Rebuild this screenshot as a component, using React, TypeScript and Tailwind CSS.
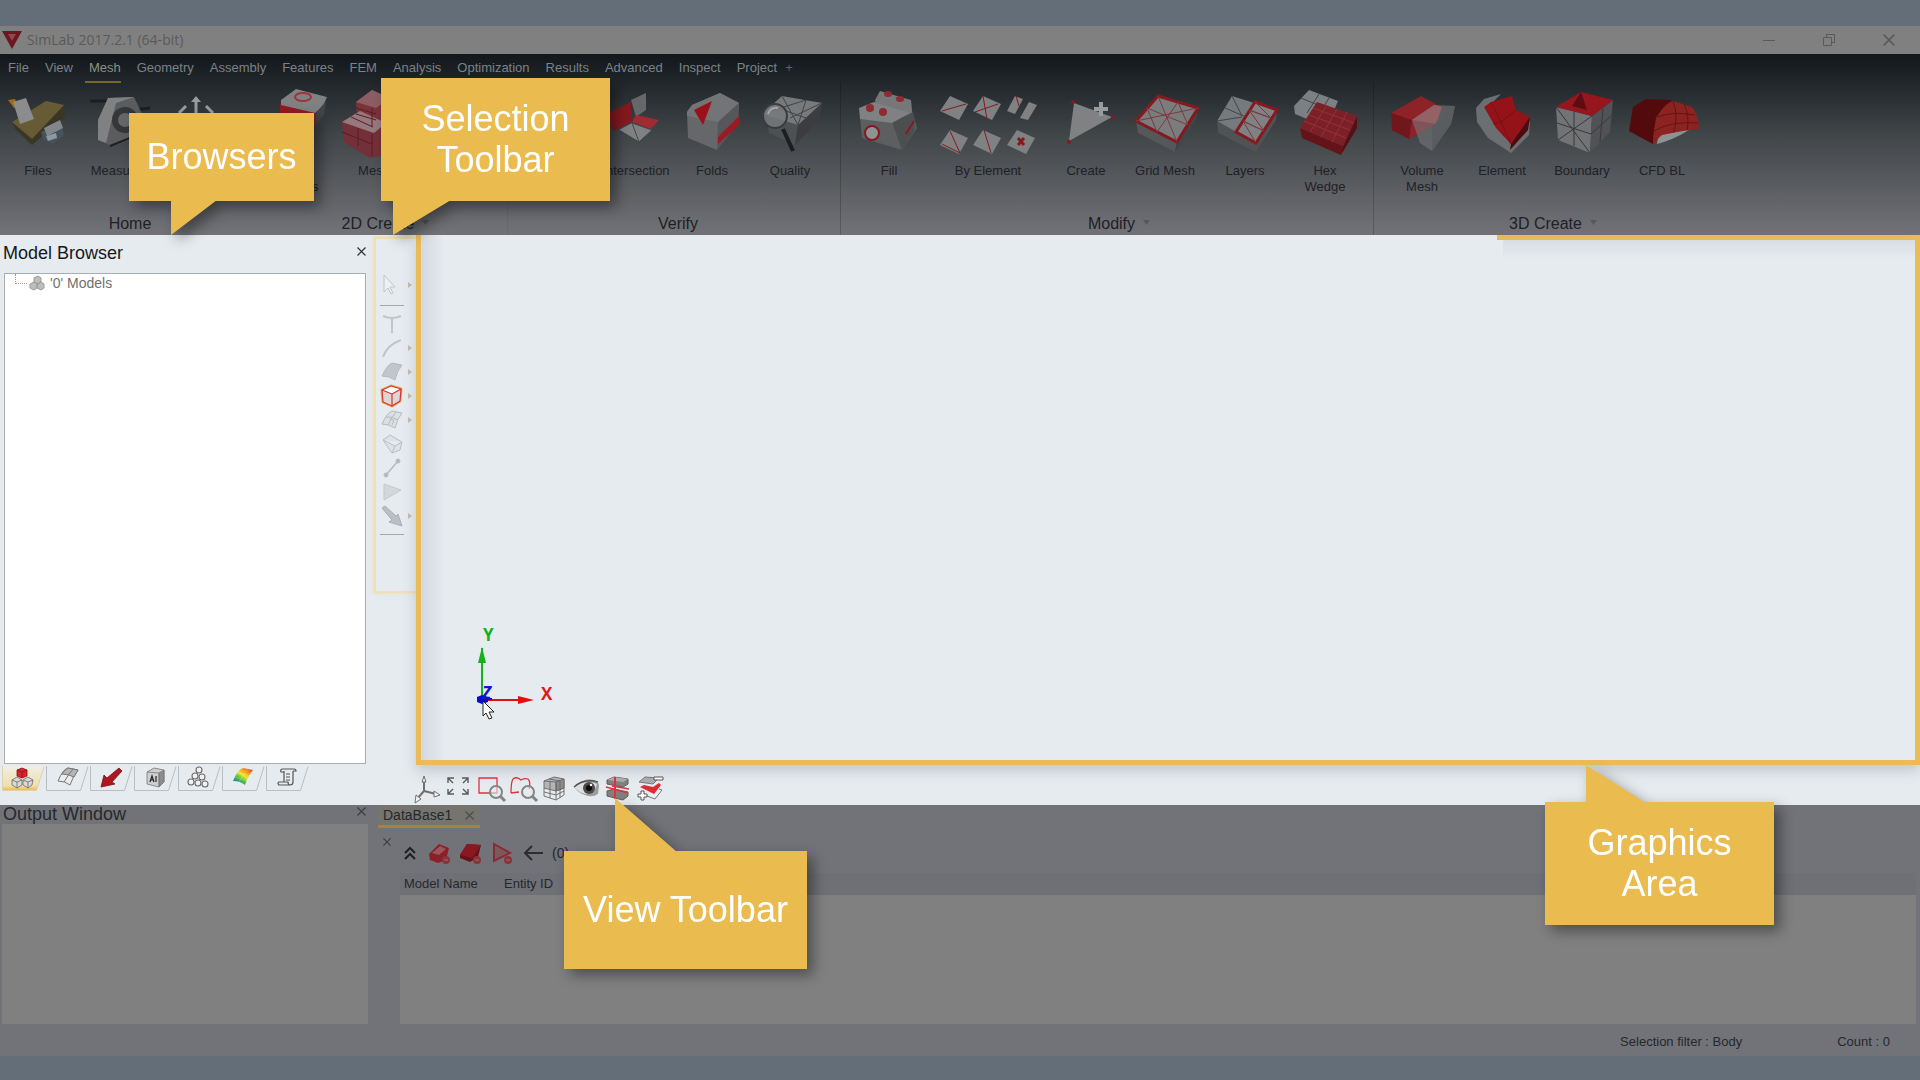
import type { ReactNode } from "react";
import clsx from "clsx";

const LIGHT = "#7f8182";
const MID = "#656769";
const DARK = "#424548";
const RED = "#86191f";

/* ---------- Ribbon icons ---------- */

function Big({ children, w = 64 }: { children: ReactNode; w?: number }) {
  return (
    <svg width={w} height={64} viewBox={`0 0 ${w} 64`} className="shrink-0 overflow-visible" aria-hidden="true">
      {children}
    </svg>
  );
}

const FilesIcon = () => (
  <Big>
    <path d="M6 34 40 13l18 4 1 12-33 28-16-15z" fill="#3a3627" />
    <path d="M6 34 40 13l18 4-32 34z" fill="#665b35" />
    <path d="m2 12 7-1 3 8-4 1z" fill="#a06c12" />
    <path d="m7 14 13-4 8 21-14 5z" fill="#8a8c8d" />
    <path d="m35 44 20-9 3 12-12 9-9-5z" fill="#46535f" />
    <path d="m38 40 16-8 3 8-16 8z" fill="#82878c" />
    <path d="m40 48 10-3 1 5-9 3z" fill="#8f98a1" />
  </Big>
);

const MeasureIcon = () => (
  <Big>
    <path d="M6 13h22M50 22l16-2" stroke="#1c1e21" strokeWidth="3" />
    <path d="m14 32 10-22 26-1 10 21-14 22-18 6-14-6z" fill="#5a5c5e" />
    <path d="m14 32 10-22 26-1-18 6-10 40-8-3z" fill={LIGHT} />
    <circle cx="41" cy="32" r="13" fill="#343638" />
    <circle cx="41" cy="32" r="7" fill={MID} />
    <path d="m26 58 20-8" stroke="#1f2022" strokeWidth="2" />
  </Big>
);

const OrientIcon = () => (
  <Big>
    <path d="M32 26V11M15 25l7-7M49 25l-7-7" stroke="#999c9f" strokeWidth="3" fill="none" />
    <path d="m27 14 5-6 5 6z" fill="#999c9f" />
  </Big>
);

const FillHolesIcon = () => (
  <Big>
    <path d="m10 16 36 9-2 16-34-8z" fill="#94191f" />
    <path d="m11 12 15-11 31 8-4 9-8 7-34-8z" fill={LIGHT} />
    <path d="m46 25 10-12-2 14-9 12z" fill={DARK} />
    <ellipse cx="33" cy="9" rx="8" ry="4" fill="none" stroke="#a3303a" strokeWidth="2" />
  </Big>
);

const MeshIcon = () => (
  <Big>
    <path d="m14 14 16-12 18 8-2 32-30 2z" fill="#7a333a" />
    <path d="m0 34 18-11 26 12-2 32-14 3L2 54z" fill="#743038" />
    <path d="m0 34 18-11 26 12-12 10z" fill="#96797c" />
    <path d="m14 14 16-12 18 8-14 10z" fill="#8c5e63" />
    <path d="M14 20l20 6M14 26l20 6M0 44l30 12M16 40v18M30 46v22M9 29l22 10M30 20v18" stroke="#5c1a22" fill="none" />
  </Big>
);

const IntersectionIcon = () => (
  <Big>
    <path d="M27 12 42 5v17l-10 7z" fill={MID} />
    <path d="M2 26 27 14v20l-17 9z" fill={RED} />
    <path d="m32 27 23 5-8 9-19-7z" fill="#a02b31" />
    <path d="m15 42 13-7 20 7-13 12z" fill={LIGHT} />
    <path d="m15 42 20 12-7-19M35 54l13-12-20-7" stroke={DARK} fill="none" />
  </Big>
);

const FoldsIcon = () => (
  <Big>
    <path d="m7 24 5-7 28-12 19 10-1 19-21 28-29-12z" fill={MID} />
    <path d="m7 24 5-7 28-12 19 10-21 19-31-6z" fill="#727476" />
    <path d="M38 34 59 15l-1 20-21 27z" fill="#55575a" />
    <path d="m14 22 18-9-9 24z" fill="#9c1119" />
    <path d="m38 49 22-22v9L38 56z" fill="#9c1b22" />
  </Big>
);

const QualityIcon = () => (
  <Big>
    <path d="m8 26 32 11-3 20-26-12z" fill="#4e5154" />
    <path d="m40 37 24-22-2 17-25 25z" fill="#3b3d40" />
    <path d="m4 26 20-18 40 7-24 22z" fill="#77797b" />
    <path d="m24 8 16 29 8-25M14 18l34 12M64 15 32 30M10 24l38-12" stroke={DARK} fill="none" />
    <circle cx="17" cy="28" r="12" fill="#77797b" fillOpacity=".85" stroke="#3a3c3e" strokeWidth="2" />
    <path d="M10 26a8 8 0 0 1 10-6" stroke="#a5a7a9" strokeWidth="2" fill="none" />
    <path d="m25 41 10 22" stroke="#1d1e20" strokeWidth="4" />
  </Big>
);

const FillIcon = () => (
  <Big>
    <path d="m18 12 5-9 31 9 2 20-36-8z" fill="#757779" />
    <path d="m3 30 32 4 21-8 4 14-15 22-40-12z" fill="#5c5e60" />
    <path d="m35 34 10 28 13-20-2-18z" fill="#4c4e50" />
    <path d="m2 20 15-6 36 11-18 10-32-4z" fill={LIGHT} />
    <g fill="#8f2a30">
      <circle cx="13" cy="20" r="4" />
      <circle cx="26" cy="24" r="4" />
      <ellipse cx="31" cy="6" rx="4" ry="3" />
      <ellipse cx="43" cy="11" rx="4" ry="3" />
    </g>
    <circle cx="15" cy="45" r="7" fill="#909294" stroke={RED} strokeWidth="2" />
    <path d="m49 46 8-13" stroke={RED} strokeWidth="2" />
  </Big>
);

const TILES = [
  { x: 14, y: 20, d: "m-12 3 24-7" },
  { x: 47, y: 20, d: "m-12 4 23-8M-4-12l4 23" },
  { x: 81, y: 20, d: "m-5-12 3 10" },
  { x: 14, y: 54, d: "m-12 2 18 9M-4-11l10 22" },
  { x: 47, y: 54, d: "m-3-12 7 23" },
  { x: 81, y: 54, d: "m-3-4 6 7m0-7-6 7" },
];

const ByElementIcon = () => (
  <Big w={96}>
    {TILES.map((tile, i) => (
      <g key={i} transform={`translate(${tile.x} ${tile.y})`}>
        {i === 2 ? (
          <path d="m-14 3 8-15 8 3-8 15zM-1 10 8-6l8 3-9 15z" fill={LIGHT} />
        ) : (
          <path d="m-14 3 10-15L14-4 5 12z" fill={LIGHT} />
        )}
        <path d={tile.d} stroke={RED} strokeWidth={i === 5 ? 3 : 1} fill="none" />
      </g>
    ))}
  </Big>
);

const CreateIcon = () => (
  <Big>
    <path d="m20 15 38 14-43 24z" fill={LIGHT} />
    <path d="M47 14v14M40 21h14" stroke="#999b9d" strokeWidth="4" />
    <circle cx="19" cy="14" r="2" fill={RED} />
    <circle cx="59" cy="29" r="2" fill={RED} />
    <circle cx="15" cy="54" r="2" fill={RED} />
  </Big>
);

const GridMeshIcon = () => (
  <Big>
    <path d="m3 33 41 21-2 10L5 45z" fill="#55575a" />
    <path d="m44 54 21-34-2 12-21 32z" fill={DARK} />
    <path d="M25 8 65 20 44 54 3 33z" fill="#7a7c7e" stroke={RED} strokeWidth="3" />
    <path d="m25 8 19 46M14 20l41 17M45 14 24 44M65 20 3 33M14 20l10 24M45 14l10 23" stroke="#7a3a3f" fill="none" />
  </Big>
);

const LayersIcon = () => (
  <Big>
    <path d="m4 33 39 20 21-31-1 10-20 32L5 45z" fill="#505254" />
    <path d="m4 33 15-25 45 14-21 33z" fill="#777a7c" />
    <path d="m12 20 21 9M19 8l10 20M4 33l25-4" stroke={DARK} fill="none" />
    <path d="m42 14 22 8-21 33-20-11z" fill={LIGHT} stroke={RED} strokeWidth="3" />
    <path d="m36 22 22 8M30 33l21 10M42 14l16 16-22-8 15 21-21-10 13 22" stroke="#7a3a3f" fill="none" />
  </Big>
);

const HexWedgeIcon = () => (
  <Big>
    <path d="M1 18 16 2l29 11-6 14-25 4L2 26z" fill="#7c8082" />
    <path d="m8 10 29 12M26 6 14 25M36 10 25 28" stroke={DARK} fill="none" />
    <path d="m7 40 43 18-2 9L9 50z" fill="#641319" />
    <path d="m50 58 14-30v12L48 67z" fill="#560f14" />
    <path d="m24 14 40 14-14 30L7 40z" fill="#7c2027" />
    <path d="m20 20 41 15M16 27l41 15M11 33l42 17M34 17 17 44M44 21 28 49M54 24 39 54" stroke="#963038" fill="none" />
  </Big>
);

const VolumeMeshIcon = () => (
  <Big>
    <path d="m1 25 30-17 20 11-5 17-27 15-17-9z" fill="#8d2227" />
    <path d="m1 25 21 7-3 19-17-9z" fill="#6f171c" />
    <path d="m22 32 22-15 21 1-4 18-19 27-12-8z" fill="#75787a" fillOpacity=".6" />
    <path d="m22 32 22-15 8 2-6 17z" fill="#946164" />
    <path d="m42 38 23-20-4 18-19 27z" fill="#5a5d5f" />
  </Big>
);

const ElementIcon = () => (
  <Big>
    <path d="m6 20 8-9 17-5-9 9 4 24 15 17 19-23-1 14-18 18-23-15L7 34z" fill="#6c6f71" />
    <path d="m21 14 21-6 4 14 14 7-19 27-15-16-12-21z" fill="#951318" />
    <path d="m21 14 10 20 10 22M31 34l15-12M31 34l-8 2" stroke="#7a0f14" fill="none" />
    <path d="m41 56 19-27-2 13-18 20z" fill="#4d0b0e" />
  </Big>
);

const BoundaryIcon = () => (
  <Big>
    <path d="m6 19 36 9-2 37L8 52z" fill="#717375" />
    <path d="m42 28 21-16-3 32-20 21z" fill="#505255" />
    <path d="M6 19 31 4l32 8-21 16z" fill="#96161e" />
    <path d="m22 18 9-14 6 18z" fill="#5c0c12" />
    <path d="m7 35 34 11M24 24v34M6 19l34 46M42 28 8 52M53 20l-3 34M41 46l20-18" stroke="#36383a" fill="none" />
  </Big>
);

const CfdIcon = () => (
  <Big>
    <path d="m-1 43 4-24 13-8 26 1-16 17-3 27z" fill="#520a0d" />
    <path d="M23 56q0-16 4-27 6-12 16-16l19 6q7 8 7 22-16 1-28 6-10 3-18 9z" fill="#8c2320" />
    <path d="M27 29q16-6 38-2M24 43q16-10 44-8M43 13q6 16 0 34M54 16q6 12 3 27" stroke="#5f1514" fill="none" />
    <path d="M27 56q0-6 5-9 14-3 27-5-16 10-32 14z" fill="#8f9293" />
  </Big>
);

/* ---------- Ribbon data ---------- */

const TABS = [
  "File", "View", "Mesh", "Geometry", "Assembly", "Features", "FEM",
  "Analysis", "Optimization", "Results", "Advanced", "Inspect", "Project",
];

type Tool = { label: string; icon: ReactNode; width?: string; wrap?: string };
type Group = { name: string; menu?: boolean; className: string; title?: string; tools: Tool[] };

const GROUPS: Group[] = [
  {
    name: "Home",
    className: "w-[260px]",
    tools: [
      { label: "Files", icon: <FilesIcon />, width: "w-[76px]" },
      { label: "Measure", icon: <MeasureIcon /> },
      { label: "Orient", icon: <OrientIcon /> },
    ],
  },
  {
    name: "2D Create",
    menu: true,
    className: "w-[248px] border-r border-black/5",
    title: "pl-1",
    tools: [
      { label: "Fill Holes", icon: <FillHolesIcon />, width: "w-[84px]", wrap: "w-10" },
      { label: "Mesh", icon: <MeshIcon />, width: "w-[60px]" },
    ],
  },
  {
    name: "Verify",
    className: "w-[333px] border-r border-black/20",
    title: "pl-2",
    tools: [
      { label: "Intersection", icon: <IntersectionIcon />, width: "w-[76px] ml-[90px]" },
      { label: "Folds", icon: <FoldsIcon />, width: "w-[76px]" },
      { label: "Quality", icon: <QualityIcon /> },
    ],
  },
  {
    name: "Modify",
    menu: true,
    className: "w-[533px] pl-2 border-r border-black/20",
    title: "pl-4",
    tools: [
      { label: "Fill", icon: <FillIcon /> },
      { label: "By Element", icon: <ByElementIcon />, width: "w-[118px]" },
      { label: "Create", icon: <CreateIcon />, width: "w-[78px]" },
      { label: "Grid Mesh", icon: <GridMeshIcon /> },
      { label: "Layers", icon: <LayersIcon /> },
      { label: "Hex Wedge", icon: <HexWedgeIcon />, wrap: "w-12" },
    ],
  },
  {
    name: "3D Create",
    menu: true,
    className: "w-[350px] pl-2",
    tools: [
      { label: "Volume Mesh", icon: <VolumeMeshIcon />, wrap: "w-14" },
      { label: "Element", icon: <ElementIcon /> },
      { label: "Boundary", icon: <BoundaryIcon /> },
      { label: "CFD BL", icon: <CfdIcon /> },
    ],
  },
];

/* ---------- Small pieces ---------- */

function Cross({ size = 9, className }: { size?: number; className?: string }) {
  return (
    <svg width={size} height={size} viewBox="0 0 9 9" className={className} aria-hidden="true">
      <path d="m.5.5 8 8m0-8-8 8" stroke="currentColor" strokeWidth="1.2" />
    </svg>
  );
}

function Callout({ children, className, tail }: { children: ReactNode; className: string; tail: ReactNode }) {
  return (
    <div
      className={clsx(
        "absolute z-20 flex items-center justify-center bg-[#eabb4e] pb-[2px] text-center text-4xl leading-[41px] text-white drop-shadow-[6px_6px_7px_rgba(0,0,0,0.4)]",
        className
      )}
    >
      {children}
      {tail}
    </div>
  );
}

function Tail({ w, h, points, className }: { w: number; h: number; points: string; className: string }) {
  return (
    <svg width={w} height={h} className={clsx("absolute", className)} aria-hidden="true">
      <polygon points={points} fill="#eabb4e" />
    </svg>
  );
}

/* ---------- Browser tabs ---------- */

const BROWSER_TABS = [
  {
    label: "Model",
    icon: (
      <g stroke="#6b6b6b" strokeWidth=".8">
        <path d="m12 14 5-3 5 3v5l-5 3-5-3zM23 14l5-3 5 3-1 5-4 3-5-3z" fill="#d9d9d9" />
        <path d="m12 14 5 2 5-2M23 14l5 2 5-2M17 16v6M28 16v6" fill="none" />
        <path d="m17 4 5-2 5 2v6l-5 2-5-2z" fill="#d8242c" stroke="#8d1218" />
        <path d="m17 4 5 2 5-2M22 6v6" fill="none" stroke="#8d1218" />
      </g>
    ),
  },
  {
    label: "Mesh",
    icon: (
      <g stroke="#777" strokeWidth="1">
        <path d="M14 15q5-12 10-13l10 2q-5 6-8 15-5-4-12-4z" fill="#ececec" />
        <path d="M24 2l10 2-4 7q-6-3-12-3 3-5 6-6z" fill="#b5b5b5" />
        <path d="M29 3q-5 6-9 13" fill="none" />
      </g>
    ),
  },
  {
    label: "Loads",
    icon: <path d="m13 21 3-12 3 3L31 2l3 3-10 11 3 2z" fill="#b01520" stroke="#701018" strokeWidth=".8" />,
  },
  {
    label: "Attributes",
    icon: (
      <g stroke="#777" strokeWidth=".8">
        <path d="m15 6 7-4 10 2v12l-5 5-12-3z" fill="#cfcfcf" />
        <path d="m27 7 5-3v12l-5 5z" fill="#8d8d8d" />
        <path d="m15 6 12 1v14" fill="none" />
        <path d="m18 16 2-6 2 6m-3-2h2m3-4v6" stroke="#222" strokeWidth="1.2" fill="none" />
      </g>
    ),
  },
  {
    label: "Assembly",
    icon: (
      <g fill="#f1f1f1" stroke="#6c6c6c" strokeWidth="1.1">
        <circle cx="23" cy="4" r="3" />
        <circle cx="19" cy="10" r="3" />
        <circle cx="26" cy="11" r="3" />
        <circle cx="15" cy="16" r="3" />
        <circle cx="22" cy="17" r="3" />
        <circle cx="29" cy="18" r="3" />
      </g>
    ),
  },
  {
    label: "Results",
    icon: (
      <g>
        <path d="M13 15q5-12 10-13l10 2q-5 6-8 15-5-4-12-4z" fill="url(#rainbow)" />
        <path d="m18 7 13 3M15 11l13 4M28 3q-5 6-9 13" stroke="#fff" strokeOpacity=".35" strokeWidth=".6" fill="none" />
      </g>
    ),
  },
  {
    label: "Scripts",
    icon: (
      <g stroke="#555" strokeWidth="1.2" fill="none">
        <path d="M18 3h12q2 0 2 2h-3M18 3q-2 1-1 3h3M20 5v11M29 5v11q0 3-3 3H15q-2-2 0-3h9q0 3 2 3" />
        <path d="M22 8h4M22 11h4M22 14h4" />
      </g>
    ),
  },
];

/* ---------- Selection tools ---------- */

const SELECTION_TOOLS = [
  { label: "Node", icon: <path d="M3 4q9 4 18 0M12 6v15" stroke="#bfc5ca" strokeWidth="2" fill="none" /> },
  { label: "Edge", menu: true, icon: <path d="M3 21Q7 9 21 4" stroke="#bfc5ca" strokeWidth="2" fill="none" /> },
  { label: "Face", menu: true, icon: <path d="M2 16Q7 5 12 3l10 2q-5 6-7 15-6-4-13-4z" fill="#c0c6cb" stroke="#b4babf" /> },
  {
    label: "Body",
    menu: true,
    active: true,
    icon: (
      <g strokeLinejoin="round">
        <path d="m2 6 9-4 10 3-1 12-8 5-9-4z" fill="#f6efee" stroke="#f3a055" strokeWidth="3" />
        <path d="m2 6 9-4 10 3-9 5z" fill="#fff" />
        <path d="m2 6 10 4 9-5-1 12-8 5-9-4z" fill="#dcd6d6" />
        <path d="m2 6 9-4 10 3-1 12-8 5-9-4zM2 6l10 4 9-5M12 10v12" fill="none" stroke="#cf3b2c" strokeWidth="1.2" />
      </g>
    ),
  },
  {
    label: "Element face",
    menu: true,
    icon: (
      <g stroke="#b4babf" fill="#dbe0e4">
        <path d="M2 16Q7 5 12 3l10 2q-5 6-7 15-6-4-13-4z" />
        <path d="M6 9q6-1 12 3M16 4q-5 6-8 13M10 11l4 1-2 5" fill="none" />
      </g>
    ),
  },
  { label: "Element", icon: <path d="m3 8 7-5 12 7-2 8-8 3zM3 8l12 6 7-4M15 14l-3 7" stroke="#b9bfc4" fill="#dde2e6" /> },
  {
    label: "Element edge",
    icon: (
      <g fill="#b4babf" stroke="#b4babf">
        <path d="m6 19 12-14" strokeWidth="1.5" />
        <circle cx="6" cy="19" r="2" />
        <circle cx="18" cy="5" r="2" />
      </g>
    ),
  },
  { label: "Shell", icon: <path d="m4 4 17 6L4 20z" fill="#d2d7db" stroke="#c2c8cd" /> },
  { label: "Direction", menu: true, icon: <path d="m2 4 3-2 11 10 2-2 4 12-13-4 3-2z" fill="#b9bfc4" stroke="#a9afb4" /> },
];

/* ---------- View tools ---------- */

const LENS = (
  <g fill="none" stroke="#858585">
    <circle cx="20" cy="18" r="6" strokeWidth="2" fill="#e6ebef" fillOpacity=".6" />
    <path d="m24 22 5 5" strokeWidth="3" />
  </g>
);

const VIEW_TOOLS = [
  {
    label: "Triad",
    icon: (
      <g stroke="#707070" fill="#f3f3f3">
        <path d="M12 17V6M12 17l12 3M12 17 5 25" strokeWidth="2" />
        <path d="m10 8 2-6 2 6zM22 17l6 4-6 2zM4 21l5 4-6 4z" />
      </g>
    ),
  },
  { label: "Fit", icon: <path d="M4 9V4h6M4 4l5 5M18 4h6v5M24 4l-5 5M4 15v5h6M4 20l5-5M18 20h6v-5M24 20l-5-5" stroke="#5b5b5b" strokeWidth="1.4" fill="none" /> },
  { label: "Zoom box", icon: <><path d="M3 4h18v15H3z" stroke="#e0323a" strokeWidth="1.3" fill="none" />{LENS}</> },
  { label: "Zoom area", icon: <><path d="M3 19Q3 8 5 5q4-3 8 1 4-2 7-1 3 3 1 10M3 19l8-1" stroke="#e0323a" strokeWidth="1.3" fill="none" />{LENS}</> },
  {
    label: "Display mode",
    icon: (
      <g stroke="#666" strokeWidth=".9">
        <path d="m4 7 10-4 10 2v9l-8 3-12-3z" fill="#b5b5b5" />
        <path d="m16 8 8-3v9l-8 3z" fill="#8b8b8b" />
        <path d="M4 14v8l12 4 8-5v-7M16 8v18M4 7l12 1M9 5l11 2v17M10 8v16M4 18l12 3 8-4" fill="none" />
      </g>
    ),
  },
  {
    label: "Visibility",
    icon: (
      <g>
        <path d="M2 13Q12 3 22 6q5 2 5 6l-1 8q-6 4-13 1Q6 19 2 13z" fill="#9d9d9d" />
        <path d="M2 13q12-8 23-3-2 9-11 10-7-1-12-7z" fill="#dedede" />
        <circle cx="17" cy="14" r="6" fill="#4a4a4a" />
        <circle cx="17" cy="14" r="3" fill="#0a0a0a" />
        <circle cx="19" cy="11" r="1.2" fill="#fff" />
        <path d="M2 13Q12 4 26 8" stroke="#555" strokeWidth="1.5" fill="none" />
      </g>
    ),
  },
  {
    label: "Section",
    icon: (
      <g>
        <path d="m3 6 7-3 14 2v5l-5 3-16-3zM3 17l7-2 14 3v4l-5 4-16-4z" fill="#808080" stroke="#5c5c5c" />
        <path d="m3 6 7-3 14 2-5 3z" fill="#ababab" />
        <path d="m2 13 22 6M8 12l17 3" stroke="#e0323a" strokeWidth="1.5" />
        <path d="M11 3v22" stroke="#e0323a" strokeWidth="2" />
      </g>
    ),
  },
  {
    label: "Layers",
    icon: (
      <g>
        <path d="m3 8 6-5 14 1-6 6z" fill="#aaa" stroke="#777" />
        <path d="m11 22 8 3 7-9-3-1" fill="#eee" stroke="#777" />
        <path d="m4 13 4-2 9 2 6-4 2 2-7 9z" fill="#dd2b33" />
        <path d="M18 3h9v3h-9zM5 17h3v3h3v3H8v3H5v-3H2v-3h3z" fill="#fff" stroke="#555" />
      </g>
    ),
  },
];

/* ---------- Sections ---------- */

function TitleBar() {
  return (
    <div className="flex h-7 items-center bg-[#808080] text-[#5a5a5a]">
      <svg width="20" height="18" viewBox="0 0 20 18" className="ml-[2px]" aria-hidden="true">
        <path d="M0 0h20L10 18z" fill="#6c1620" />
        <path d="M6 3h8l-4 7z" fill="#8d4950" />
      </svg>
      <h1 className="ml-[5px] font-['Open_Sans'] text-sm">SimLab 2017.2.1 (64-bit)</h1>
      <div className="ml-auto flex items-center gap-12 pr-[25px]">
        <button aria-label="Minimize" className="flex w-3 justify-center">
          <span className="h-px w-3 bg-[#5a5a5a]" />
        </button>
        <button aria-label="Restore">
          <svg width="12" height="12" viewBox="0 0 12 12" fill="none" stroke="currentColor" aria-hidden="true">
            <path d="M.5 3.5h8v8h-8zM3.5 3V.5h8v8H9" />
          </svg>
        </button>
        <button aria-label="Close">
          <Cross size={12} />
        </button>
      </div>
    </div>
  );
}

function Ribbon() {
  return (
    <header className="relative bg-linear-to-b from-[#12171c] via-[#414649] via-45% to-[#737378] text-[#1e2126]">
      <nav className="flex h-7 items-center gap-4 pl-2 text-[13px] text-[#7c8288]">
        {TABS.map((tab) => (
          <a
            key={tab}
            href="#"
            className={clsx("relative leading-7", tab === "Mesh" && "text-[#8d8f86]")}
          >
            {tab}
            {tab === "Mesh" && <span className="absolute -left-1 right-0 -bottom-px h-[2px] bg-[#75682a]" />}
          </a>
        ))}
        <button aria-label="Add tab" className="-ml-2 text-[#5c6268]">+</button>
      </nav>

      <div className="flex h-[153px]">
        {GROUPS.map((group) => (
          <section key={group.name} className={clsx("flex shrink-0 flex-col pt-[6px]", group.className)}>
            <div className="flex flex-1 items-start">
              {group.tools.map((tool) => (
                <button
                  key={tool.label}
                  className={clsx("flex shrink-0 flex-col items-center text-[13px] leading-4", tool.width ?? "w-20")}
                >
                  {tool.icon}
                  <span className={clsx("mt-[11px]", tool.wrap)}>{tool.label}</span>
                </button>
              ))}
            </div>
            <h2 className={clsx("flex items-center justify-center gap-2 text-base leading-[22px]", group.title)}>
              {group.name}
              {group.menu && (
                <svg width="7" height="5" viewBox="0 0 7 5" className="mb-1" aria-hidden="true">
                  <path d="M0 0h7L3.5 5z" fill="#55575c" />
                </svg>
              )}
            </h2>
          </section>
        ))}
      </div>

      <Callout
        className="bottom-[34px] left-[129px] h-[88px] w-[185px]"
        tail={<Tail w={48} h={35} points="0,0 46,0 0,35" className="top-[87px] left-[42px]" />}
      >
        Browsers
      </Callout>
      <Callout
        className="bottom-[34px] left-[381px] h-[123px] w-[229px]"
        tail={<Tail w={60} h={35} points="0,0 58,0 0,35" className="top-[122px] left-3" />}
      >
        Selection
        <br />
        Toolbar
      </Callout>
    </header>
  );
}

function ModelBrowser() {
  return (
    <aside className="flex w-[366px] shrink-0 flex-col">
      <div className="flex h-[38px] items-center justify-between pb-[2px] pl-[3px]">
        <h2 className="text-lg text-[#15171a]">Model Browser</h2>
        <button aria-label="Close Model Browser" className="mb-1 text-[#333]">
          <Cross />
        </button>
      </div>
      <div className="ml-1 flex-1 border border-[#a9adb1] bg-white">
        <div className="flex h-[18px] items-center pl-[10px] text-sm text-[#707070]">
          <span className="mb-[9px] h-[10px] w-3 border-b border-l border-dotted border-[#999]" />
          <svg width="16" height="16" viewBox="0 0 16 16" className="mr-[5px] ml-[2px]" aria-hidden="true">
            <path d="m5 3 4-2 3 2v4l-3 2-4-2zM1 9l4-2 3 2v4l-3 2-4-2zM8 9l4-2 3 2v4l-3 2-4-2z" fill="#bdbdbd" stroke="#9a9a9a" />
          </svg>
          '0' Models
        </div>
      </div>
      <div className="flex h-[41px] items-start pt-[2px] pl-[2px]">
        <svg width="0" height="0" className="absolute" aria-hidden="true">
          <linearGradient id="rainbow" x1="1" y1="0" x2="0.2" y2="1">
            <stop offset="0" stopColor="#e8281e" />
            <stop offset=".3" stopColor="#f59a1b" />
            <stop offset=".5" stopColor="#f2e527" />
            <stop offset=".7" stopColor="#4fc23a" />
            <stop offset="1" stopColor="#2468d8" />
          </linearGradient>
          <linearGradient id="activeTab" x1="0" y1="0" x2="0" y2="1">
            <stop offset="0" stopColor="#f0eee6" />
            <stop offset=".8" stopColor="#efe0b0" />
            <stop offset="1" stopColor="#e8bd45" />
          </linearGradient>
        </svg>
        {BROWSER_TABS.map((tab, i) => (
          <button key={tab.label} aria-label={tab.label}>
            <svg width="44" height="25" viewBox="0 0 44 25" className="overflow-visible" aria-hidden="true">
              <path d="M.5 0v24.5h34L42 .5" fill={i === 0 ? "url(#activeTab)" : "none"} stroke={i === 0 ? "#dcd2b0" : "#b9bec3"} />
              <g transform="translate(-2 0)">{tab.icon}</g>
            </svg>
          </button>
        ))}
      </div>
    </aside>
  );
}

function FlyoutMark() {
  return (
    <svg width="4" height="6" viewBox="0 0 4 6" className="absolute -right-1" aria-hidden="true">
      <path d="m0 0 4 3-4 3z" fill="#c3bda9" />
    </svg>
  );
}

function SelectionToolbar() {
  return (
    <div className="w-[50px] shrink-0 pt-[2px] pl-2">
      <div className="flex h-[356px] flex-col items-center border-2 border-r-0 border-[#f3dfae] pt-[34px] pr-2 shadow-[0_0_4px_rgba(243,210,130,0.5)]">
        <button aria-label="Select" className="relative flex h-6 w-full items-center justify-center">
          <svg width="24" height="24" viewBox="0 0 24 24" aria-hidden="true">
            <path d="M4 2v17l4-4 3 6 2-1-3-6h5z" fill="#edf1f4" stroke="#bfc4c9" />
          </svg>
          <FlyoutMark />
        </button>
        <hr className="mt-2 mb-[6px] w-6 border-[#a4a9ad]" />
        {SELECTION_TOOLS.map((tool) => (
          <button
            key={tool.label}
            aria-label={tool.label}
            aria-pressed={!!tool.active}
            className="relative flex h-6 w-full items-center justify-center"
          >
            <svg width="24" height="24" viewBox="0 0 24 24" aria-hidden="true">
              {tool.icon}
            </svg>
            {tool.menu && <FlyoutMark />}
          </button>
        ))}
        <hr className="mt-[6px] w-6 border-[#a4a9ad]" />
      </div>
    </div>
  );
}

function GraphicsArea() {
  return (
    <main className="flex min-w-0 flex-1 flex-col">
      <div className="relative flex flex-1 items-end border-r-5 border-b-5 border-l-5 border-[#e9bc57] bg-[#e6ebef] shadow-[0_6px_12px_rgba(90,100,115,0.25)]">
        <div className="absolute inset-y-0 left-0 w-6 bg-linear-to-r from-[#d3d9df] to-[#e6ebef]" />
        <div className="absolute top-0 right-0 h-6 w-[412px] bg-linear-to-b from-[#d6d9e2] to-[#e6ebef]" />
        <div className="absolute top-0 right-0 h-[5px] w-[418px] bg-[#e6bb5c]" />
        <svg width="100" height="100" viewBox="0 0 100 100" className="relative mb-[40px] ml-[49px]" aria-label="Axes">
          <path d="M12 79V28" stroke="#12b31a" strokeWidth="2" />
          <path d="m12 27 4 16H8z" fill="#12b31a" />
          <path d="M12 80h40" stroke="#e01010" strokeWidth="2" />
          <path d="m64 80-16-4v8z" fill="#e80c0c" />
          <path d="m7 77 5-2 6 2v5l-6 2-5-2z" fill="#0a0ad0" />
          <path d="M12 79h10" stroke="#0a0ad0" strokeWidth="2" />
          <g fontFamily="Open Sans, sans-serif" fontSize="17" fontWeight="700">
            <text x="13" y="21" fill="#12b31a">Y</text>
            <text x="71" y="80" fill="#e01818">X</text>
            <text x="12" y="79" fill="#1212cc" fontStyle="italic">Z</text>
          </g>
          <path d="M13 81v15l3-3 3 6 3-1-3-6h5z" fill="#fff" stroke="#222" />
        </svg>
      </div>
      <div className="-ml-1 flex h-10 items-center gap-1 pt-[5px]">
        {VIEW_TOOLS.map((tool) => (
          <button key={tool.label} aria-label={tool.label} className="relative">
            <svg width="28" height="28" viewBox="0 0 28 28" className="overflow-visible" aria-hidden="true">
              {tool.icon}
            </svg>
          </button>
        ))}
      </div>
    </main>
  );
}

function DataIcon({ children }: { children: ReactNode }) {
  return (
    <svg width="24" height="24" viewBox="0 0 24 24" aria-hidden="true">
      {children}
      <circle cx="18" cy="19" r="4" fill="#87343b" />
      <path d="M16 19h4" stroke="#a9696e" />
    </svg>
  );
}

function LowerPanels() {
  return (
    <div className="relative bg-[#717378] text-[#26282c]">
      <div className="flex h-[219px]">
        <section className="flex w-[368px] shrink-0 flex-col pl-[2px]">
          <div className="flex h-[19px] items-center justify-between pr-[2px] pb-[2px] pl-px">
            <h2 className="text-lg leading-4">Output Window</h2>
            <button aria-label="Close Output Window" className="mb-1 text-[#3c3e42]">
              <Cross />
            </button>
          </div>
          <div className="flex-1 bg-[#808080]" />
        </section>

        <section className="ml-[10px] flex min-w-0 flex-1 flex-col pr-1">
          <div className="flex h-[23px] w-[102px] items-center justify-between border-b-3 border-[#a58240] bg-[#75746f] pr-[6px] pl-[5px] text-sm leading-5">
            DataBase1
            <button aria-label="Close DataBase1" className="text-[#494b4e]">
              <Cross />
            </button>
          </div>
          <div className="flex h-[45px] items-center pl-[5px]">
            <button aria-label="Close panel" className="mb-[18px] text-[#3c3e42]">
              <Cross size={8} />
            </button>
            <div className="ml-2 flex items-center gap-[7px] pt-1">
              <button aria-label="Collapse">
                <svg width="22" height="20" viewBox="0 0 22 20" fill="none" stroke="#1e2023" strokeWidth="2" aria-hidden="true">
                  <path d="m6 10 5-5 5 5M6 16l5-5 5 5" />
                </svg>
              </button>
              <button aria-label="Remove body">
                <DataIcon>
                  <path d="m1 13 10-10 10 4-3 12-8 3-8-3z" fill="#8a2028" />
                  <path d="m4 12 8-7 6 3-7 6z" fill="#9c555a" />
                </DataIcon>
              </button>
              <button aria-label="Remove face">
                <DataIcon>
                  <path d="m1 14 7-11 14 1-3 12-8 5-10-4z" fill="#6c1017" />
                  <path d="m1 14 7-11 14 1-9 13z" fill="#8a1820" />
                </DataIcon>
              </button>
              <button aria-label="Remove element">
                <DataIcon>
                  <path d="m4 3 16 9L4 20z" fill="#7b5a5e" stroke="#8a2a32" strokeWidth="2" />
                </DataIcon>
              </button>
              <button aria-label="Back">
                <svg width="24" height="20" viewBox="0 0 24 20" fill="none" stroke="#2b2d30" strokeWidth="2" aria-hidden="true">
                  <path d="M22 10H4m7-7-7 7 7 7" />
                </svg>
              </button>
              <span className="text-sm">(0)</span>
            </div>
          </div>
          <table className="ml-[22px] text-left text-[13px]">
            <thead>
              <tr className="h-[22px] bg-[#6e7075]">
                <th className="w-[100px] pl-1 font-normal">Model Name</th>
                <th className="pl-1 font-normal">Entity ID</th>
              </tr>
            </thead>
          </table>
          <div className="ml-[22px] flex-1 bg-[#808080]" />
        </section>
      </div>

      <footer className="flex h-8 items-center justify-end gap-[95px] pt-1 pr-[30px] text-[13px]">
        <span>Selection filter : Body</span>
        <span>Count : 0</span>
      </footer>

      <Callout
        className="top-[46px] left-[564px] h-[118px] w-[243px]"
        tail={<Tail w={64} h={54} points="0,0 62,54 0,54" className="bottom-[117px] left-[51px]" />}
      >
        View Toolbar
      </Callout>
      <Callout
        className="-top-[3px] right-[146px] h-[123px] w-[229px]"
        tail={<Tail w={62} h={38} points="0,0 60,38 0,38" className="bottom-[122px] left-[41px]" />}
      >
        Graphics
        <br />
        Area
      </Callout>
    </div>
  );
}

export default function App() {
  return (
    <div className="flex min-h-screen flex-col overflow-hidden bg-[#646e78] pt-[26px] pb-6 font-['Liberation_Sans',Arial,sans-serif]">
      <TitleBar />
      <Ribbon />
      <div className="flex flex-1 bg-[#e6ebef]">
        <ModelBrowser />
        <SelectionToolbar />
        <GraphicsArea />
      </div>
      <LowerPanels />
    </div>
  );
}
